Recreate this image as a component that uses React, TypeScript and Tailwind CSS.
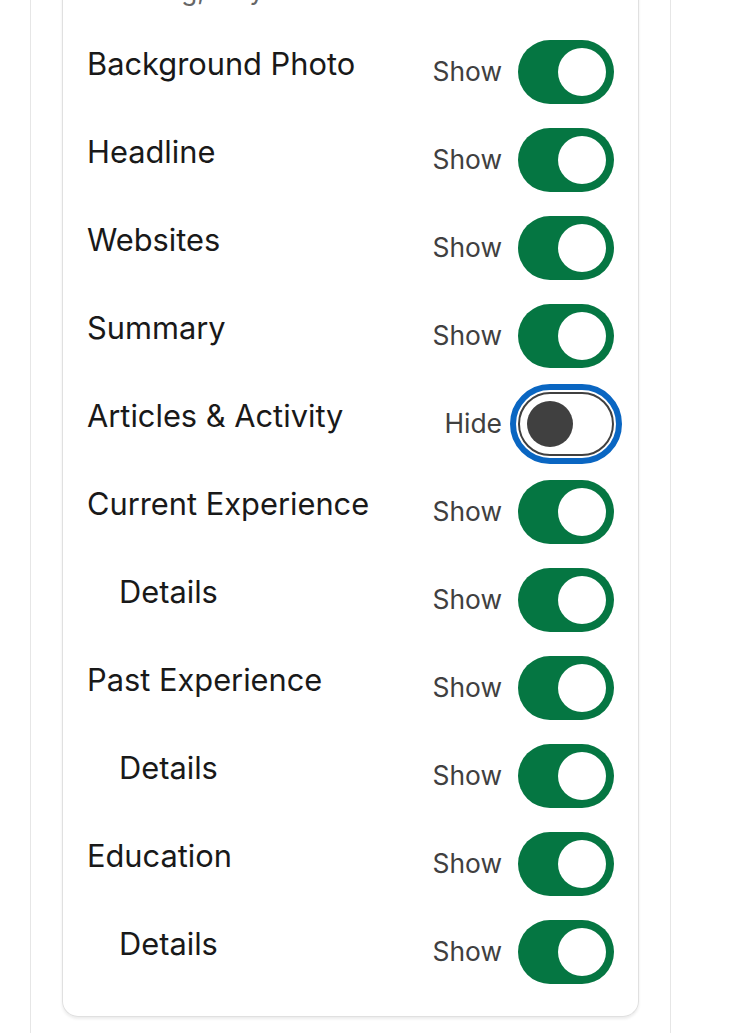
import { useState } from 'react';

type Row = { label: string; sub?: boolean; on: boolean };

const initialRows: Row[] = [
  { label: 'Background Photo', on: true },
  { label: 'Headline', on: true },
  { label: 'Websites', on: true },
  { label: 'Summary', on: true },
  { label: 'Articles & Activity', on: false },
  { label: 'Current Experience', on: true },
  { label: 'Details', sub: true, on: true },
  { label: 'Past Experience', on: true },
  { label: 'Details', sub: true, on: true },
  { label: 'Education', on: true },
  { label: 'Details', sub: true, on: true },
];

function Toggle({ on, focused, onClick }: { on: boolean; focused: boolean; onClick: () => void }) {
  return (
    <button
      onClick={onClick}
      className={
        on
          ? 'flex h-[64px] w-[96px] shrink-0 items-center justify-end rounded-full bg-[#057642] pr-[8px]'
          : 'flex h-[64px] w-[96px] shrink-0 items-center justify-start rounded-full border-2 border-[#404040] bg-white pl-[7px]' +
            (focused ? ' outline-[6px] outline-offset-[2px] outline-[#0a66c2] outline-solid' : '')
      }
    >
      <span className={on ? 'h-[48px] w-[48px] rounded-full bg-white' : 'h-[46px] w-[46px] rounded-full bg-[#404040]'} />
    </button>
  );
}

function App() {
  const [rows, setRows] = useState(initialRows);

  const flip = (i: number) => {
    setRows(prev => prev.map((r, j) => (j === i ? { ...r, on: !r.on } : r)));
  };

  return (
    <div className="min-h-screen bg-white font-['Inter',sans-serif]">
      <div className="ml-[30px] min-h-screen w-[641px] border-x border-[#e6e6e6] pb-[17px]">
        <div className="mx-[31px] -mt-[25px] rounded-b-[16px] border border-t-0 border-[#e0e0e0] px-[24px] pb-[32px] shadow-[0_2px_3px_rgba(0,0,0,0.08)]">
          <p className="mb-[33px] text-[26px] leading-[32px] text-[#666]">Branding, only</p>
          <div className="flex flex-col gap-[24px]">
            {rows.map((r, i) => (
              <div key={i} className="flex items-start justify-between">
                <span
                  className={
                    'text-[30.8px] leading-[48px] text-[#191919]' + (r.sub ? ' pl-[32px]' : '')
                  }
                >
                  {r.label}
                </span>
                <div className="flex items-center gap-[16px]">
                  <span className="text-[26.4px] text-[#404040]">{r.on ? 'Show' : 'Hide'}</span>
                  <Toggle on={r.on} focused={r.label === 'Articles & Activity'} onClick={() => flip(i)} />
                </div>
              </div>
            ))}
          </div>
        </div>
      </div>
    </div>
  );
}

export default App;
